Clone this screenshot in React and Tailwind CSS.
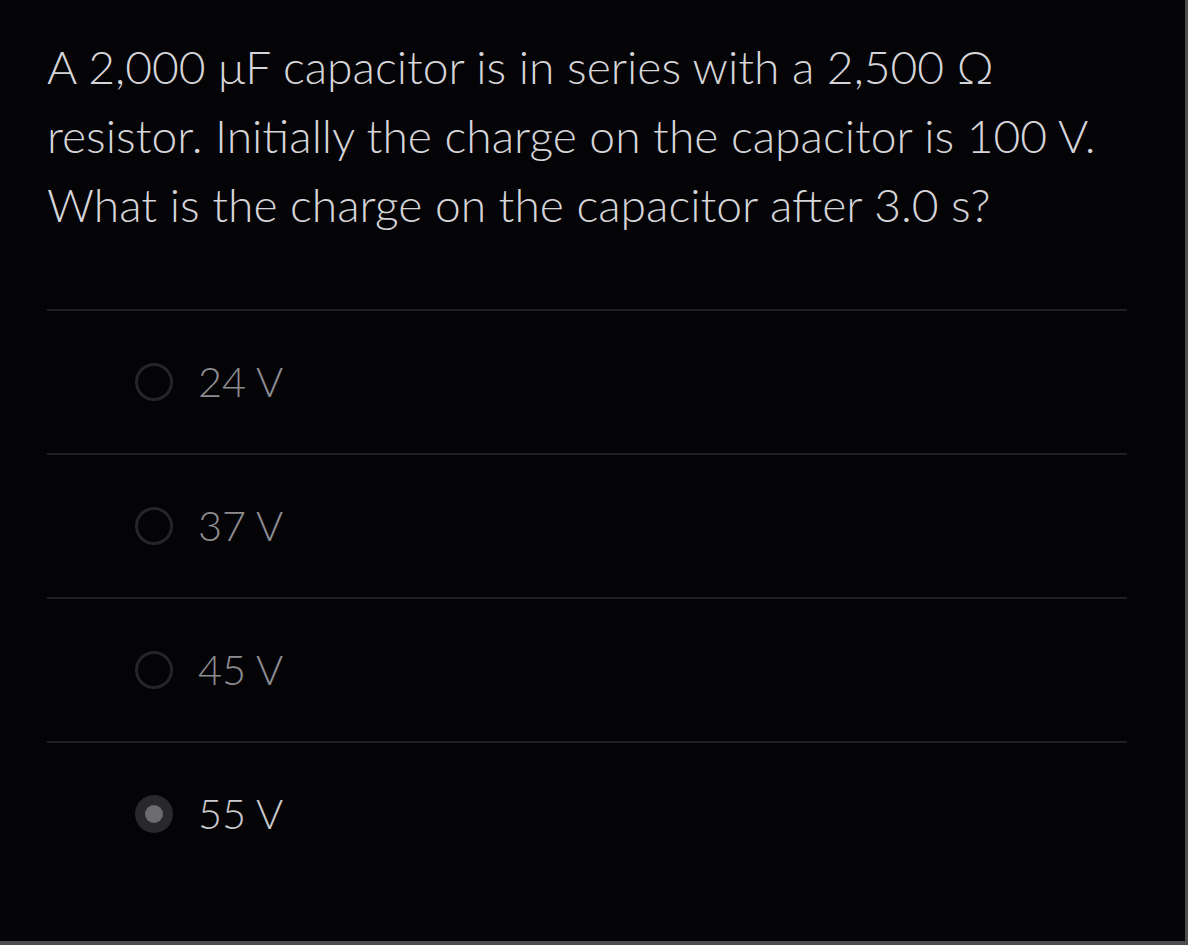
import React from "react";

const options = [
  { label: "24 V", selected: false },
  { label: "37 V", selected: false },
  { label: "45 V", selected: false },
  { label: "55 V", selected: true },
];

function Radio({ selected }) {
  if (selected) {
    return (
      <div className="flex h-[38px] w-[38px] shrink-0 items-center justify-center rounded-full bg-[#29292b]">
        <div className="h-[18px] w-[18px] rounded-full bg-[#6c6c70]" />
      </div>
    );
  }
  return <div className="h-[38px] w-[38px] shrink-0 rounded-full border-[3px] border-[#252527]" />;
}

export default function App() {
  return (
    <div
      className="flex h-[945px] w-[1188px] flex-col border-b-[4px] border-r-[3px] border-[#4d4d50] bg-[#040305]"
      style={{ fontFamily: "Lato, 'Open Sans', sans-serif" }}
    >
      <div className="pl-[47px] pr-[58px] pt-[32px]">
        <p className="text-[46.2px] font-light leading-[69px] text-[#d5d5d9]">
          <span className="block">A 2,000 μF capacitor is in series with a 2,500 Ω</span>
          <span className="block">resistor. Initially the charge on the capacitor is 100 V.</span>
          <span className="block">What is the charge on the capacitor after 3.0 s?</span>
        </p>
        <div className="mt-[70px] flex flex-col">
          {options.map((o) => (
            <div key={o.label} className="flex flex-col">
              <div className="h-[2px] bg-[#1f1f22]" />
              <div className="flex h-[142px] items-center gap-[25px] pl-[88px]">
                <Radio selected={o.selected} />
                <span
                  className={
                    "text-[41.5px] font-light leading-none " +
                    (o.selected ? "text-[#c9c9cd]" : "text-[#8d8d91]")
                  }
                >
                  {o.label}
                </span>
              </div>
            </div>
          ))}
        </div>
      </div>
    </div>
  );
}
